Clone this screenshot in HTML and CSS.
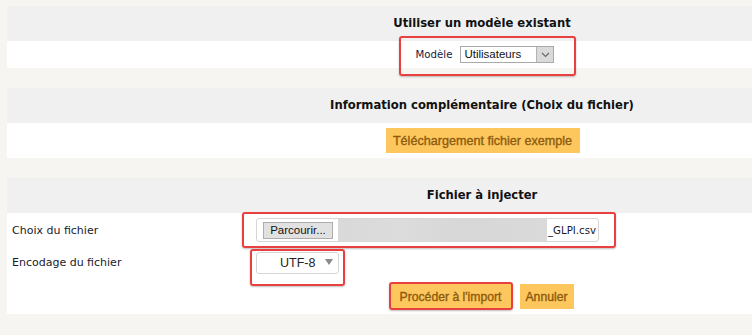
FILE: index.html
```html
<!DOCTYPE html>
<html lang="fr">
<head>
<meta charset="utf-8">
<title>Import</title>
<link rel="stylesheet" href="styles.css">
</head>
<body>
<div class="page">
  <section class="panel">
    <div class="head">Utiliser un modèle existant</div>
    <div class="row-center r1">
      <div class="group mark-model">
        <span class="lbl">Modèle</span>
        <span class="winselect">
          <span class="wtext">Utilisateurs</span>
          <span class="wbtn"><svg width="9" height="6" viewBox="0 0 9 6"><path d="M1 1 L4.5 4.5 L8 1" fill="none" stroke="#6a6a6a" stroke-width="1.2"/></svg></span>
        </span>
      </div>
    </div>
  </section>

  <section class="panel">
    <div class="head">Information complémentaire (Choix du fichier)</div>
    <div class="row-center r2">
      <span class="btn btn-dl">Téléchargement fichier exemple</span>
    </div>
  </section>

  <section class="panel">
    <div class="head">Fichier à injecter</div>
    <div class="grid">
      <div class="cell-lbl row-a">Choix du fichier</div>
      <div class="cell-val row-a">
        <div class="fileinput mark-file">
          <span class="browse">Parcourir...</span>
          <span class="blur"></span>
          <span class="fname">_GLPI.csv</span>
        </div>
      </div>
      <div class="cell-lbl row-b">Encodage du fichier</div>
      <div class="cell-val row-b">
        <div class="encselect mark-enc">
          <span class="etext">UTF-8</span>
          <span class="tri"></span>
        </div>
      </div>
    </div>
    <div class="actions">
      <span class="btn btn-go mark-go">Procéder à l'import</span>
      <span class="btn btn-cancel">Annuler</span>
    </div>
  </section>
</div>
</body>
</html>
```

FILE: styles.css
```css
html, body {
  margin: 0;
  padding: 0;
}
body {
  background: #f6f5f1;
  overflow: hidden;
  width: 752px;
  height: 335px;
  font-family: "DejaVu Sans", Verdana, sans-serif;
  color: #1a1a2a;
}
.page {
  padding: 6px 0 0 7px;
}
.panel {
  width: 950px;
  background: #ffffff;
  margin-bottom: 20px;
}
.head {
  height: 35px;
  line-height: 35px;
  background: #f0f0f0;
  text-align: center;
  font-weight: bold;
  font-size: 11.6px;
  color: #111;
}
.row-center {
  display: flex;
  justify-content: center;
  align-items: center;
}
.r1 { height: 27px; }
.r2 { height: 35px; padding-left: 1px; }

.group {
  position: relative;
  display: flex;
  align-items: center;
  gap: 8px;
  padding-left: 6px;
}
.lbl {
  font-size: 10.2px;
  color: #1a1a40;
}
.winselect {
  display: flex;
  width: 92px;
  height: 15px;
  border: 1px solid #a9a9a9;
  background: #fff;
}
.wtext {
  flex: 1;
  font-family: "Liberation Sans", Arial, sans-serif;
  font-size: 11.5px;
  line-height: 15px;
  padding-left: 3px;
  color: #111;
}
.wbtn {
  width: 16px;
  height: 15px;
  background: #dadada;
  border-left: 1px solid #b4b4b4;
  display: flex;
  align-items: center;
  justify-content: center;
}

.btn {
  display: inline-flex;
  align-items: center;
  justify-content: center;
  height: 25px;
  background: #fec75d;
  color: #8d5b0e;
  font-family: "Liberation Sans", Arial, sans-serif;
  font-size: 12.6px;
  -webkit-text-stroke: 0.35px #8d5b0e;
  white-space: nowrap;
  padding: 0 4px;
  box-sizing: border-box;
}
.btn-dl { width: 194px; }

.grid {
  display: grid;
  grid-template-columns: 249px 1fr;
}
.cell-lbl {
  font-size: 11px;
  padding-left: 5px;
  color: #1a1a2a;
}
.row-a { height: 35px; }
.row-b { height: 31px; }
.cell-lbl.row-a { line-height: 36px; }
.cell-lbl.row-b { line-height: 30px; }
.cell-val.row-a { padding-top: 5px; box-sizing: border-box; }
.cell-val.row-b { padding-top: 4px; box-sizing: border-box; }

.fileinput {
  position: relative;
  width: 343px;
  height: 24px;
  box-sizing: border-box;
  border: 1px solid #d6d6d6;
  border-radius: 3px;
  background: #fff;
  display: flex;
  align-items: center;
  padding-left: 6px;
}
.browse {
  width: 70px;
  height: 17px;
  box-sizing: border-box;
  border: 1px solid #adadad;
  background: #e1e1e1;
  font-family: "Liberation Sans", Arial, sans-serif;
  font-size: 11.5px;
  line-height: 15px;
  text-align: center;
  color: #111;
  white-space: nowrap;
}
.blur {
  width: 209px;
  height: 22px;
  margin-left: 5px;
  background: linear-gradient(90deg, #d9d9d9, #dcdcdc 30%, #d7d7d7 60%, #dadada);
}
.fname {
  font-size: 10.2px;
  color: #1a1a2a;
  padding-left: 1px;
}
.encselect {
  position: relative;
  width: 83px;
  height: 22px;
  box-sizing: border-box;
  border: 1px solid #d6d6d6;
  border-radius: 3px;
  background: #fff;
  display: flex;
  align-items: center;
  padding-left: 23px;
}
.etext {
  font-family: "Liberation Sans", Arial, sans-serif;
  font-size: 12.5px;
  color: #222;
  width: 45px;
}
.tri {
  width: 0;
  height: 0;
  border-left: 4px solid transparent;
  border-right: 4px solid transparent;
  border-top: 6px solid #8a8a8a;
  margin-top: -2px;
}

.actions {
  display: flex;
  justify-content: center;
  gap: 9px;
  height: 35px;
  padding-top: 5px;
  box-sizing: border-box;
}
.btn-go { position: relative; width: 120px; min-width: 0; padding: 0; font-size: 12.2px; }
.btn-cancel { width: 54px; min-width: 0; padding: 0; font-size: 12.2px; }

/* annotation frames laid over the content */
.mark-model::after,
.mark-file::after,
.mark-enc::after,
.mark-go::after {
  content: "";
  position: absolute;
  border: 2px solid #e8403f;
  border-radius: 3px;
  box-shadow: 0 1px 2px rgba(0,0,0,0.25);
  pointer-events: none;
}
.mark-model::after { left: -11px; right: -22px; top: -10px; bottom: -13px; }
.mark-file::after { left: -15px; right: -18px; top: -7px; bottom: -7px; }
.mark-enc::after { left: -7px; right: -7px; top: -4px; bottom: -13px; }
.mark-go::after { left: -2px; right: -2px; top: -2px; bottom: -1px; }
```
